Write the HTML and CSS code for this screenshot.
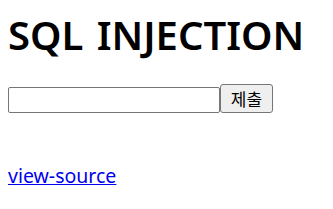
FILE: index.html
```html
<!DOCTYPE html>
<html lang="ko">

<head>
    <meta charset="UTF-8">
    <title>SQL INJECTION</title>
    <link rel="stylesheet" href="styles.css">
</head>

<body>
    <h1>SQL INJECTION</h1>
    <form class="query-form">
        <input type="text" name="id" class="query-input">
        <button type="submit" class="query-btn">제출</button>
    </form>
    <a href="#" class="source-link">view-source</a>
</body>

</html>
```

FILE: styles.css
```css
body {
    margin: 8px;
    font-family: 'Noto Sans', 'Noto Sans CJK KR', sans-serif;
    font-size: 19.5px;
    color: #000;
    background: #fff;
}

h1 {
    font-size: 40px;
    font-weight: 600;
    word-spacing: 3px;
    margin: 0;
    line-height: 54px;
}

.query-form {
    display: flex;
    align-items: flex-end;
    margin: 22px 0 0 0;
}

.query-input {
    width: 212px;
    height: 26px;
    box-sizing: border-box;
    border: 1px solid #767676;
    border-radius: 2px;
    padding: 1px 2px;
    margin: 0;
}

.query-btn {
    height: 29px;
    width: 53px;
    box-sizing: border-box;
    border: 1px solid #767676;
    border-radius: 3px;
    background: #efefef;
    font-family: 'Noto Sans CJK KR', sans-serif;
    font-size: 17px;
    color: #000;
    padding: 0;
    margin: 0;
}

.source-link {
    display: inline-block;
    margin-top: 50px;
    color: #0000ee;
    line-height: 26px;
}
```
